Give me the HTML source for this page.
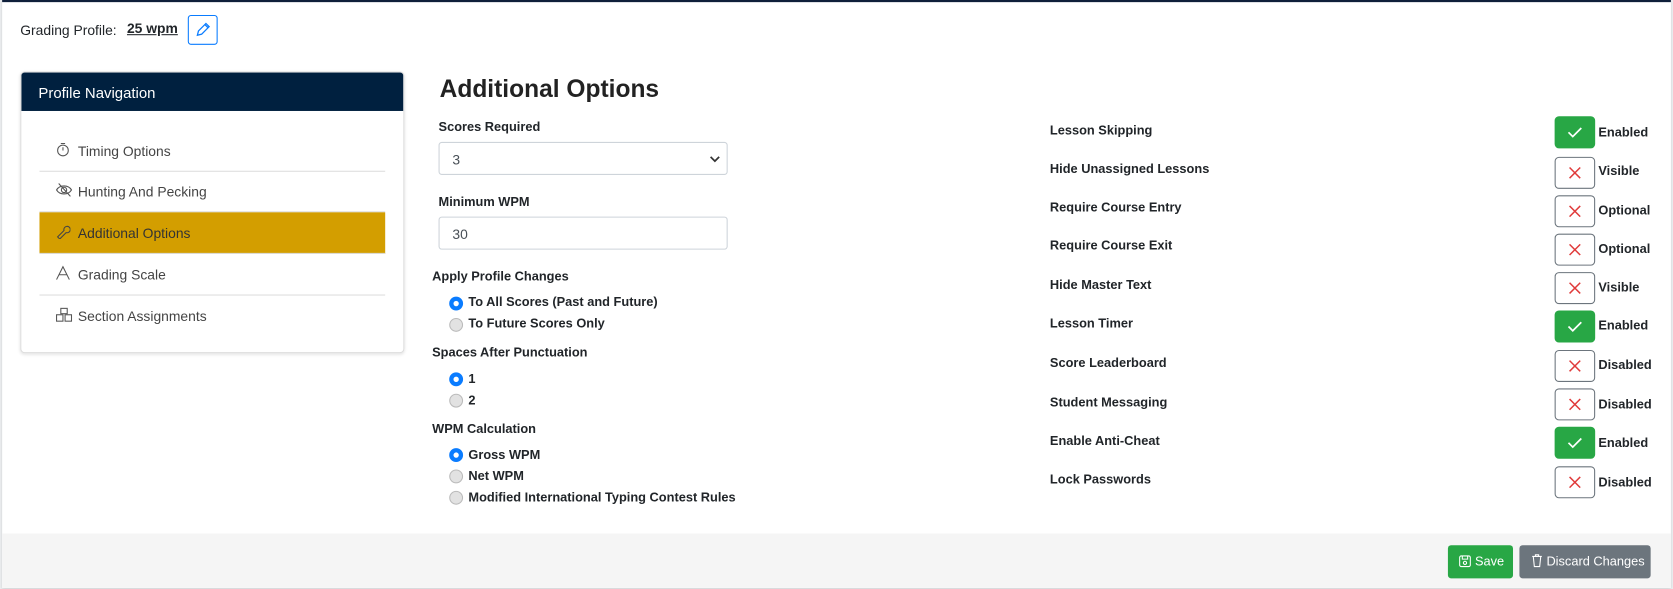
<!DOCTYPE html>
<html><head><style>
*{box-sizing:border-box;margin:0;padding:0}
body{width:1673px;height:589px;background:#eef0f2;font-family:"Liberation Sans",sans-serif;color:#212529;position:relative;overflow:hidden}
.wrap{position:absolute;left:0;top:0;width:1568px;height:552px;transform:scale(1.067);transform-origin:0 0}
.card{position:absolute;left:2px;top:0;width:1564px;height:551px;background:#fff;border-top:2px solid #0f1f3a;box-shadow:0 1px 3px rgba(0,0,0,.15)}
.abs{position:absolute}
.footer{position:absolute;left:0;top:498px;width:1564px;height:51px;background:#f5f5f5}
.nav{position:absolute;left:17px;top:65px;width:360px;height:264px;border:1px solid #ddd;border-radius:4px;box-shadow:0 1px 3px rgba(0,0,0,.12);overflow:hidden}
.navh{height:36px;background:#00203f;color:#fff;font-size:14px;padding:11px 16px}
.item{position:absolute;left:35px;width:324px;height:39px;font-size:13px;color:#444;padding:12px 0 0 36px;border-bottom:1px solid #ddd}
.item svg{position:absolute;left:15px;top:11px}
.lbl{position:absolute;font-size:12px;font-weight:bold}
.ctl{position:absolute;left:409px;width:271px;height:31px;border:1px solid #ced4da;border-radius:3px;font-size:13px;color:#495057;padding:8px 12px}
.radio{position:absolute;left:419px;width:13px;height:13px;border-radius:50%;background:#e2e2e2;border:1px solid #bbb}
.radio.on{background:#fff;border:4px solid #0a7cff}
.rt{position:absolute;left:437px;font-size:12px;font-weight:bold}
.rl{position:absolute;left:982px;font-size:12px;font-weight:bold}
.tg{position:absolute;left:1455px;width:38px;height:30px;border-radius:4px;border:1px solid #6c757d;background:#fff}
.tg.g{background:#28a745;border-color:#28a745}
.tt{position:absolute;left:1496px;font-size:12px;font-weight:bold}
</style></head><body>
<div class="wrap">
<div class="card">
<div class="abs" style="left:17px;top:19px;font-size:13px">Grading Profile:</div>
<div class="abs" style="left:117px;top:17px;font-size:13px;font-weight:bold;text-decoration:underline">25 wpm</div>
<div class="abs" style="left:174px;top:12px;width:28px;height:28px;border:1px solid #0a7cff;border-radius:3px">
<svg width="26" height="26" viewBox="0 0 26 26"><path d="M8 18l1-4 7-7 3 3-7 7z M15 8l3 3" fill="none" stroke="#0a7cff" stroke-width="1.2"/></svg></div>
<div class="nav"><div class="navh">Profile Navigation</div></div>
<div class="item" style="top:120px"><svg width="14" height="14" viewBox="0 0 14 14"><circle cx="7" cy="8" r="5" fill="none" stroke="#555"/><path d="M5 1.5h4M7 8V5" stroke="#555"/></svg>Timing Options</div>
<div class="item" style="top:158px"><svg width="16" height="14" viewBox="0 0 16 14"><path d="M1 7c3-5 11-5 14 0c-3 5-11 5-14 0zM3 1l11 12" fill="none" stroke="#555"/><circle cx="8" cy="7" r="2.5" fill="none" stroke="#555"/></svg>Hunting And Pecking</div>
<div class="item" style="top:197px;background:#d39e00;color:#333"><svg width="14" height="14" viewBox="0 0 14 14"><path d="M2 12l6-6a3 3 0 1 1 2 2l-6 6z" fill="none" stroke="#444"/></svg>Additional Options</div>
<div class="item" style="top:236px"><svg width="14" height="14" viewBox="0 0 14 14"><path d="M1 13L7 1l6 12M3.5 8.5h7" fill="none" stroke="#555"/></svg>Grading Scale</div>
<div class="item" style="top:275px;border:none"><svg width="16" height="14" viewBox="0 0 16 14"><rect x="5" y="1" width="6" height="5" fill="none" stroke="#555"/><rect x="1" y="7" width="6" height="6" fill="none" stroke="#555"/><rect x="9" y="7" width="6" height="6" fill="none" stroke="#555"/></svg>Section Assignments</div>

<div class="abs" style="left:410px;top:68px;font-size:23px;font-weight:bold;color:#222">Additional Options</div>
<div class="lbl" style="left:409px;top:110px">Scores Required</div>
<div class="ctl" style="top:131px">3<svg class="abs" style="right:6px;top:11px" width="10" height="8" viewBox="0 0 10 8"><path d="M1 2l4 4 4-4" fill="none" stroke="#333" stroke-width="1.6"/></svg></div>
<div class="lbl" style="left:409px;top:180px">Minimum WPM</div>
<div class="ctl" style="top:201px">30</div>
<div class="lbl" style="left:403px;top:250px">Apply Profile Changes</div>
<div class="radio on" style="top:276px"></div><div class="rt" style="top:274px">To All Scores (Past and Future)</div>
<div class="radio" style="top:296px"></div><div class="rt" style="top:294px">To Future Scores Only</div>
<div class="lbl" style="left:403px;top:321px">Spaces After Punctuation</div>
<div class="radio on" style="top:347px"></div><div class="rt" style="top:346px">1</div>
<div class="radio" style="top:367px"></div><div class="rt" style="top:366px">2</div>
<div class="lbl" style="left:403px;top:393px">WPM Calculation</div>
<div class="radio on" style="top:418px"></div><div class="rt" style="top:417px">Gross WPM</div>
<div class="radio" style="top:438px"></div><div class="rt" style="top:437px">Net WPM</div>
<div class="radio" style="top:458px"></div><div class="rt" style="top:457px">Modified International Typing Contest Rules</div>

<div class="rl" style="top:113px">Lesson Skipping</div><div class="tg g" style="top:107px"><svg width="36" height="28" viewBox="0 0 36 28"><path d="M12 14l4 4 8-8" fill="none" stroke="#fff" stroke-width="1.6"/></svg></div><div class="tt" style="top:115px">Enabled</div>
<div class="rl" style="top:149px">Hide Unassigned Lessons</div><div class="tg" style="top:145px"><svg width="36" height="28" viewBox="0 0 36 28"><path d="M13 9l10 10M23 9L13 19" stroke="#e03b3b" stroke-width="1.4"/></svg></div><div class="tt" style="top:151px">Visible</div>
<div class="rl" style="top:185px">Require Course Entry</div><div class="tg" style="top:181px"><svg width="36" height="28" viewBox="0 0 36 28"><path d="M13 9l10 10M23 9L13 19" stroke="#e03b3b" stroke-width="1.4"/></svg></div><div class="tt" style="top:188px">Optional</div>
<div class="rl" style="top:221px">Require Course Exit</div><div class="tg" style="top:217px"><svg width="36" height="28" viewBox="0 0 36 28"><path d="M13 9l10 10M23 9L13 19" stroke="#e03b3b" stroke-width="1.4"/></svg></div><div class="tt" style="top:224px">Optional</div>
<div class="rl" style="top:258px">Hide Master Text</div><div class="tg" style="top:253px"><svg width="36" height="28" viewBox="0 0 36 28"><path d="M13 9l10 10M23 9L13 19" stroke="#e03b3b" stroke-width="1.4"/></svg></div><div class="tt" style="top:260px">Visible</div>
<div class="rl" style="top:294px">Lesson Timer</div><div class="tg g" style="top:289px"><svg width="36" height="28" viewBox="0 0 36 28"><path d="M12 14l4 4 8-8" fill="none" stroke="#fff" stroke-width="1.6"/></svg></div><div class="tt" style="top:296px">Enabled</div>
<div class="rl" style="top:331px">Score Leaderboard</div><div class="tg" style="top:326px"><svg width="36" height="28" viewBox="0 0 36 28"><path d="M13 9l10 10M23 9L13 19" stroke="#e03b3b" stroke-width="1.4"/></svg></div><div class="tt" style="top:333px">Disabled</div>
<div class="rl" style="top:368px">Student Messaging</div><div class="tg" style="top:362px"><svg width="36" height="28" viewBox="0 0 36 28"><path d="M13 9l10 10M23 9L13 19" stroke="#e03b3b" stroke-width="1.4"/></svg></div><div class="tt" style="top:370px">Disabled</div>
<div class="rl" style="top:404px">Enable Anti-Cheat</div><div class="tg g" style="top:398px"><svg width="36" height="28" viewBox="0 0 36 28"><path d="M12 14l4 4 8-8" fill="none" stroke="#fff" stroke-width="1.6"/></svg></div><div class="tt" style="top:406px">Enabled</div>
<div class="rl" style="top:440px">Lock Passwords</div><div class="tg" style="top:435px"><svg width="36" height="28" viewBox="0 0 36 28"><path d="M13 9l10 10M23 9L13 19" stroke="#e03b3b" stroke-width="1.4"/></svg></div><div class="tt" style="top:443px">Disabled</div>

<div class="footer">
<div class="abs" style="left:1355px;top:11px;width:61px;height:31px;background:#28a745;border-radius:3px;color:#fff;font-size:12px;padding:8px 0 0 10px"><svg width="12" height="12" viewBox="0 0 12 12" style="vertical-align:-2px"><rect x="1" y="1" width="10" height="10" rx="1.5" fill="none" stroke="#fff"/><circle cx="6" cy="7.5" r="1.5" fill="none" stroke="#fff"/><path d="M3.5 1v3h5V1" fill="none" stroke="#fff"/></svg> Save</div>
<div class="abs" style="left:1422px;top:11px;width:123px;height:31px;background:#6c757d;border-radius:3px;color:#fff;font-size:12px;padding:8px 0 0 11px"><svg width="11" height="13" viewBox="0 0 11 13" style="vertical-align:-2px"><path d="M1 2.5h9M2 2.5l1 9.5h5l1-9.5M4 2.5V1h3v1.5" fill="none" stroke="#fff"/></svg> Discard Changes</div>
</div>
</div>
</div>
</body></html>
